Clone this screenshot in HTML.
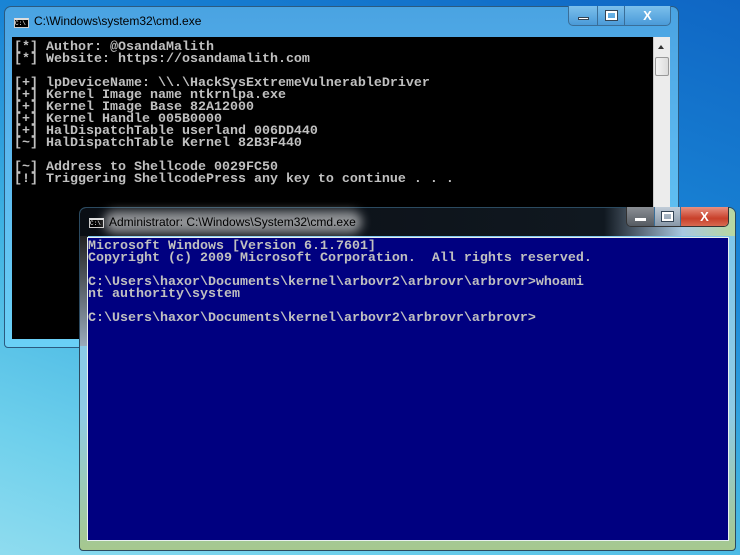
<!DOCTYPE html>
<html><head><style>
*{margin:0;padding:0;box-sizing:border-box}
body{width:740px;height:555px;overflow:hidden;position:relative;
background:linear-gradient(200deg,#0f66c4 0%,#1a86d6 35%,#3fb2e2 60%,#6fd0ec 85%,#8fdcef 100%);
font-family:"Liberation Sans",sans-serif}
.win{position:absolute;border-radius:7px 7px 4px 4px}
.con{position:absolute;font-family:"Liberation Mono",monospace;font-size:13.33px;line-height:12px;white-space:pre;font-weight:bold}
.title{position:absolute;font-size:12px}
.ico{position:absolute;width:15px;height:10px;background:#000;border:1px solid #ccc;border-top:2px solid #ddd;color:#fff;font-size:6px;line-height:7px;font-family:"Liberation Mono",monospace}
.btns{position:absolute;height:20px;border:1px solid #3a6e98;border-top:none;border-radius:0 0 5px 5px;display:flex;overflow:hidden}
.btns div{height:100%;border-right:1px solid #3a6e98;display:flex;align-items:center;justify-content:center;color:#fff;font-weight:bold;font-size:13px}
</style></head><body>
<!-- window 1 -->
<div class="win" style="left:4px;top:6px;width:675px;height:342px;background:linear-gradient(180deg,#4aa3e2 0%,#5ab6ee 40%,#6ad0f6 100%);border:1px solid #2b5a80"></div>
<div class="ico" style="left:14px;top:18px">C:\</div>
<div class="title" style="left:34px;top:14px;color:#000">C:\Windows\system32\cmd.exe</div>
<div class="btns" style="left:568px;top:6px;width:103px;background:linear-gradient(#7cc0ec,#4a9ad8)">
<div style="width:29px"><span style="display:block;width:11px;height:3px;background:#fff;border:1px solid #345;margin-top:6px"></span></div>
<div style="width:27px"><span style="display:block;width:11px;height:9px;border:2px solid #fff;outline:1px solid #345"></span></div>
<div style="flex:1;border:none">X</div></div>
<div style="position:absolute;left:12px;top:37px;width:642px;height:302px;background:#000"></div>
<div style="position:absolute;left:653px;top:37px;width:17px;height:302px;background:#ececec;border-left:1px solid #ccc"></div>
<div style="position:absolute;left:658px;top:45px;width:0;height:0;border:3px solid transparent;border-bottom:4px solid #333;border-top:none"></div>
<div style="position:absolute;left:655px;top:57px;width:14px;height:19px;background:linear-gradient(90deg,#f4f4f4,#dcdcdc);border:1px solid #999;border-radius:2px"></div>
<div class="con" style="left:14px;top:42px;color:#c0c0c0">[*] Author: @OsandaMalith
[*] Website: https://osandamalith.com

[+] lpDeviceName: \\.\HackSysExtremeVulnerableDriver
[+] Kernel Image name ntkrnlpa.exe
[+] Kernel Image Base 82A12000
[+] Kernel Handle 005B0000
[+] HalDispatchTable userland 006DD440
[~] HalDispatchTable Kernel 82B3F440

[~] Address to Shellcode 0029FC50
[!] Triggering ShellcodePress any key to continue . . .</div>
<!-- window 2 -->
<div class="win" style="left:79px;top:207px;width:657px;height:344px;background:linear-gradient(180deg,#7ec6ea 0%,#8ecbe6 60%,#a6c88e 100%);border:1px solid #2b4a60"></div>
<div style="position:absolute;left:80px;top:208px;width:655px;height:28px;border-radius:6px 6px 0 0;background:linear-gradient(90deg,#0a0e14 0%,#101820 80%,#607080 86%,#a8c8e0 92%,#b8d8a0 100%)"></div>
<div style="position:absolute;left:80px;top:236px;width:8px;height:110px;background:linear-gradient(#222,#9ab)"></div>
<div class="ico" style="left:89px;top:218px">C:\</div>
<div style="position:absolute;left:104px;top:211px;width:258px;height:22px;border-radius:11px;background:rgba(255,255,255,0.55);filter:blur(5px)"></div>
<div class="title" style="left:109px;top:215px;color:#000">Administrator: C:\Windows\System32\cmd.exe</div>
<div class="btns" style="left:626px;top:207px;width:103px;border-color:#333">
<div style="width:28px;background:linear-gradient(#8a8e94,#555b62)"><span style="display:block;width:11px;height:3px;background:#fff;margin-top:6px"></span></div>
<div style="width:26px;background:linear-gradient(#c0ccd8,#8898a8)"><span style="display:block;width:11px;height:9px;border:2px solid #fff;outline:1px solid #345"></span></div>
<div style="flex:1;border:none;background:linear-gradient(#e89080,#c8402a 60%,#d86a50)">X</div></div>
<div style="position:absolute;left:87px;top:237px;width:642px;height:304px;background:#000080;border:1px solid #e8f0f0"></div>
<div class="con" style="left:88px;top:241px;color:#c0c0c0">Microsoft Windows [Version 6.1.7601]
Copyright (c) 2009 Microsoft Corporation.  All rights reserved.

C:\Users\haxor\Documents\kernel\arbovr2\arbrovr\arbrovr>whoami
nt authority\system

C:\Users\haxor\Documents\kernel\arbovr2\arbrovr\arbrovr></div>
</body></html>
